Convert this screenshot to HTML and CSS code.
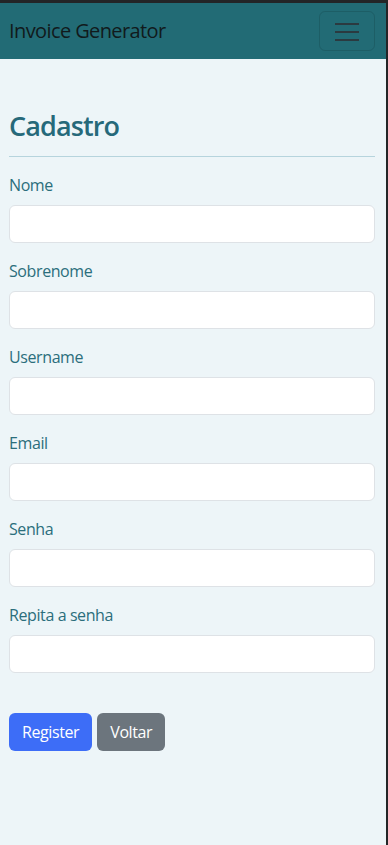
FILE: index.html
```html
<!DOCTYPE html>
<html lang="pt">
<head>
<meta charset="utf-8">
<title>Cadastro</title>
<link rel="stylesheet" href="styles.css">
</head>
<body>
<div class="frame">
  <nav class="navbar">
    <span class="brand">Invoice Generator</span>
    <button class="toggler" type="button" aria-label="Menu">
      <svg width="26" height="20" viewBox="0 0 26 20"><path d="M1 3h24M1 11h24M1 19h24" stroke="#2b3a40" stroke-width="2"/></svg>
    </button>
  </nav>
  <main class="content">
    <h1 class="title">Cadastro</h1>
    <hr class="divider">
    <form class="form">
      <div class="field"><label class="label">Nome</label><input class="input" type="text"></div>
      <div class="field"><label class="label">Sobrenome</label><input class="input" type="text"></div>
      <div class="field"><label class="label">Username</label><input class="input" type="text"></div>
      <div class="field"><label class="label">Email</label><input class="input" type="email"></div>
      <div class="field"><label class="label">Senha</label><input class="input" type="password"></div>
      <div class="field"><label class="label">Repita a senha</label><input class="input" type="password"></div>
      <div class="actions">
        <button class="btn btn-primary" type="button">Register</button>
        <button class="btn btn-secondary" type="button">Voltar</button>
      </div>
    </form>
  </main>
</div>
</body>
</html>
```
FILE: styles.css
```css
html, body {
  margin: 0;
  padding: 0;
  height: 100%;
}
body {
  background: #232527;
  font-family: "Open Sans", "Noto Sans", sans-serif;
  font-size: 16px;
  line-height: 1.5;
  letter-spacing: -0.4px;
}
.frame {
  box-sizing: border-box;
  margin-top: 3px;
  margin-right: 2px;
  height: calc(100% - 3px);
  background: #edf5f8;
}
.navbar {
  height: 56px;
  background: #226b75;
  display: flex;
  align-items: center;
  justify-content: space-between;
  padding: 0 11px 0 9px;
}
.brand {
  font-size: 20px;
  letter-spacing: -0.6px;
  color: #111a1c;
}
.toggler {
  width: 56px;
  height: 40px;
  border: 1px solid rgba(0, 0, 0, 0.12);
  border-radius: 6px;
  background: transparent;
  display: flex;
  align-items: center;
  justify-content: center;
  padding: 0;
}
.content {
  padding: 50px 11px 0 9px;
}
.title {
  margin: 0;
  font-size: 27px;
  font-weight: 600;
  line-height: 1.25;
  letter-spacing: -0.9px;
  color: #26697a;
}
.divider {
  margin: 13px 0 16px;
  border: 0;
  border-top: 1px solid #b6d4dd;
}
.field {
  display: flex;
  flex-direction: column;
  margin-bottom: 16px;
}
.label {
  color: #2b6e7c;
  margin-bottom: 8px;
}
.input {
  box-sizing: border-box;
  height: 38px;
  border: 1px solid #dee2e6;
  border-radius: 6px;
  background: #fff;
  font: inherit;
}
.actions {
  display: flex;
  gap: 5px;
  margin-top: 40px;
}
.btn {
  height: 38px;
  padding: 0 13px;
  border: 0;
  border-radius: 6px;
  color: #fff;
  font: inherit;
  letter-spacing: -0.4px;
}
.btn-primary {
  background: #3d6df7;
}
.btn-secondary {
  background: #6c757d;
}
```
